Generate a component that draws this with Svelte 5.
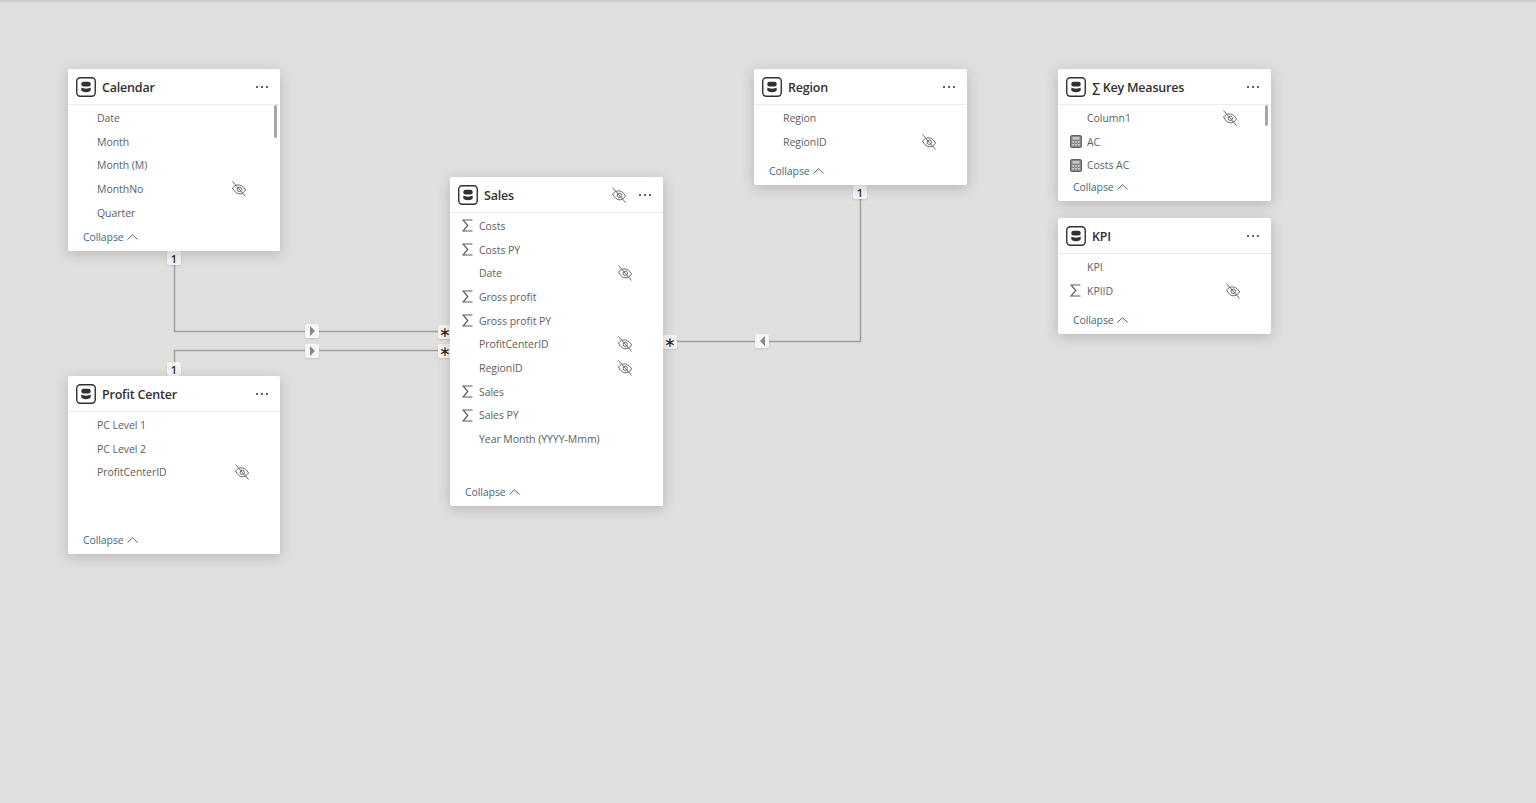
<script lang="ts">
const tables = [
  { name: 'Calendar', x: 68, y: 69, w: 212, h: 182, scroll: 33, rows: [
    { n: 'Date' }, { n: 'Month' }, { n: 'Month (M)' }, { n: 'MonthNo', hid: true }, { n: 'Quarter' },
  ] },
  { name: 'Profit Center', x: 68, y: 376, w: 212, h: 178, rows: [
    { n: 'PC Level 1' }, { n: 'PC Level 2' }, { n: 'ProfitCenterID', hid: true },
  ] },
  { name: 'Sales', x: 450, y: 177, w: 213, h: 329, hid: true, rows: [
    { n: 'Costs', icon: 'sum' }, { n: 'Costs PY', icon: 'sum' }, { n: 'Date', hid: true },
    { n: 'Gross profit', icon: 'sum' }, { n: 'Gross profit PY', icon: 'sum' },
    { n: 'ProfitCenterID', hid: true }, { n: 'RegionID', hid: true },
    { n: 'Sales', icon: 'sum' }, { n: 'Sales PY', icon: 'sum' }, { n: 'Year Month (YYYY-Mmm)' },
  ] },
  { name: 'Region', x: 754, y: 69, w: 213, h: 116, rows: [
    { n: 'Region' }, { n: 'RegionID', hid: true },
  ] },
  { name: '∑ Key Measures', x: 1058, y: 69, w: 213, h: 132, scroll: 33, thumb: 21, rows: [
    { n: 'Column1', hid: true }, { n: 'AC', icon: 'calc' }, { n: 'Costs AC', icon: 'calc' },
  ] },
  { name: 'KPI', x: 1058, y: 218, w: 213, h: 116, rows: [
    { n: 'KPI' }, { n: 'KPIID', icon: 'sum', hid: true },
  ] },
];

const markers = [
  { x: 174, y: 258, t: '1' },
  { x: 174, y: 369, t: '1' },
  { x: 445, y: 332, t: '∗', star: true },
  { x: 445, y: 351, t: '∗', star: true },
  { x: 670, y: 342, t: '∗', star: true },
  { x: 860, y: 192, t: '1' },
  { x: 312, y: 331, dir: 'right' },
  { x: 312, y: 351, dir: 'right' },
  { x: 762, y: 341, dir: 'left' },
];
</script>

{#snippet eye()}
  <svg class="eye" viewBox="0 0 16 16" fill="none" stroke="#6b6a68" stroke-width="1">
    <path d="M1.500 7C3.500 4.500 6 3.500 8.500 4s4.500 2 6 5c-1.500 2.500-4 4-6.500 3.800S3.500 10.500 1.500 7Z" />
    <circle cx="8.300" cy="8.300" r="2.200" />
    <path d="M1.500 .5 14.500 15.500" />
  </svg>
{/snippet}

<main class="canvas">
  <svg class="links" width="1536" height="803" fill="none" stroke="#a19f9d" stroke-width="1.5">
    <path d="M174.500 251V331.500H450" />
    <path d="M174.500 376V350.500H450" />
    <path d="M860.500 185V341.500H663" />
  </svg>

  {#each markers as m}
    <div class="marker" class:star={m.star} style="left:{m.x - 7}px;top:{m.y - 7}px">
      {#if m.dir === 'right'}
        <svg width="7" height="10" viewBox="0 0 7 10"><path d="M1 0 6 5 1 10Z" fill="#8a8886" /></svg>
      {:else if m.dir === 'left'}
        <svg width="7" height="10" viewBox="0 0 7 10"><path d="M6 0 1 5 6 10Z" fill="#8a8886" /></svg>
      {:else}
        {m.t}
      {/if}
    </div>
  {/each}

  {#each tables as t}
    <section class="card" style="left:{t.x}px;top:{t.y}px;width:{t.w}px;height:{t.h}px">
      <header class="head">
        <svg class="db" viewBox="0 0 20 20">
          <rect x=".75" y=".75" width="18.500" height="18.500" rx="3.500" fill="none" stroke="#323130" stroke-width="1.400" />
          <rect x="5.300" y="4.800" width="9.400" height="4.800" rx="2.300" fill="#323130" />
          <path d="M5.300 10.600c1.200.8 2.900 1.100 4.700 1.100s3.500-.3 4.700-1.100v2.400c0 1.300-2.100 2.200-4.700 2.200s-4.700-.9-4.700-2.200Z" fill="#323130" />
        </svg>
        <span class="title">{t.name}</span>
        {#if t.hid}<span class="head-eye">{@render eye()}</span>{/if}
        <span class="dots"><i></i><i></i><i></i></span>
      </header>
      <div class="body">
        {#if t.scroll}<div class="thumb" style="height:{t.thumb ?? 33}px"></div>{/if}
        {#each t.rows as r}
          <div class="row" style="padding-right:{t.scroll ?? 30}px">
            <span class="slot">
              {#if r.icon === 'sum'}
                <svg width="11" height="13" viewBox="0 0 11 13" fill="none" stroke="#605e5c" stroke-width="1.200"><path d="M10.500 1H1L5.800 6.500 1 12h9.500" /></svg>
              {:else if r.icon === 'calc'}
                <svg width="12" height="13" viewBox="0 0 12 13">
                  <rect x=".5" y=".5" width="11" height="12" rx="1.500" fill="#8a8886" stroke="#605e5c" />
                  <rect x="2.500" y="2.300" width="7" height="2.200" fill="#d2d0ce" />
                  <path d="M2.500 6.200h1.500v1.500H2.500zM5.300 6.200h1.500v1.500H5.300zM8 6.200h1.500v1.500H8zM2.500 9h1.500v1.500H2.500zM5.300 9h1.500v1.500H5.300zM8 9h1.500v1.500H8z" fill="#edebe9" />
                </svg>
              {/if}
            </span>
            <span class="name">{r.n}</span>
            {#if r.hid}{@render eye()}{/if}
          </div>
        {/each}
        <div class="collapse">
          Collapse
          <svg width="11" height="6" viewBox="0 0 11 6" fill="none" stroke="#3f6b7f"><path d="M.5 5.500 5.500 .7l5 4.800" /></svg>
        </div>
      </div>
    </section>
  {/each}
</main>

<style>
:global(body) {
  margin: 0;
  background: #e0dfdd;
}

.canvas {
  position: relative;
  width: 1536px;
  height: 803px;
  overflow: hidden;
  font-family: "Open Sans", "Noto Sans", sans-serif;
  background: linear-gradient(#c9c8c6 0, #dedddb 3px, #e0dfdd 5px);
}

.links {
  position: absolute;
  left: 0;
  top: 0;
}

.marker {
  position: absolute;
  width: 14px;
  height: 14px;
  display: grid;
  place-items: center;
  background: #f6f5f4;
  border-radius: 2px;
  box-shadow: 0 1px 2px rgba(0, 0, 0, 0.12);
  font-size: 11px;
  font-weight: 600;
  color: #323130;
  line-height: 1;
}

.marker.star {
  box-sizing: border-box;
  padding-bottom: 3px;
  font-size: 14px;
  font-family: "DejaVu Sans", sans-serif;
  font-weight: 400;
  color: #252423;
}

.card {
  position: absolute;
  display: flex;
  flex-direction: column;
  background: #fff;
  border-radius: 2px;
  box-shadow: 0 3px 14px rgba(0, 0, 0, 0.18);
}

.head {
  display: flex;
  align-items: center;
  box-sizing: border-box;
  height: 36px;
  padding: 1px 12px 0 8px;
  border-bottom: 1px solid #edebe9;
  flex: none;
}

.db {
  width: 20px;
  height: 20px;
  flex: none;
}

.title {
  margin-left: 6px;
  flex: 1;
  font-size: 12.500px;
  font-weight: 600;
  color: #323130;
  letter-spacing: -0.2px;
}

.head-eye {
  display: flex;
  margin-right: 12px;
}

.eye {
  width: 16px;
  height: 16px;
  flex: none;
}

.dots {
  display: flex;
  gap: 2.500px;
}

.dots i {
  width: 2.500px;
  height: 2.500px;
  border-radius: 50%;
  background: #323130;
}

.body {
  position: relative;
  flex: 1;
  display: flex;
  flex-direction: column;
  padding: 1px 0 5px;
  min-height: 0;
}

.thumb {
  position: absolute;
  right: 3px;
  top: 0;
  width: 3.500px;
  border-radius: 2px;
  background: #a8a6a4;
}

.row {
  display: flex;
  align-items: center;
  height: 23.700px;
  flex: none;
  padding-left: 12px;
  font-size: 10.500px;
  color: #605e5c;
}

.slot {
  width: 17px;
  display: flex;
  flex: none;
}

.name {
  flex: 1;
  letter-spacing: -0.05px;
}

.collapse {
  margin-top: auto;
  padding-left: 15px;
  height: 18px;
  display: flex;
  align-items: center;
  gap: 3px;
  font-size: 10.500px;
  letter-spacing: -0.1px;
  color: #3f6b7f;
}
</style>
